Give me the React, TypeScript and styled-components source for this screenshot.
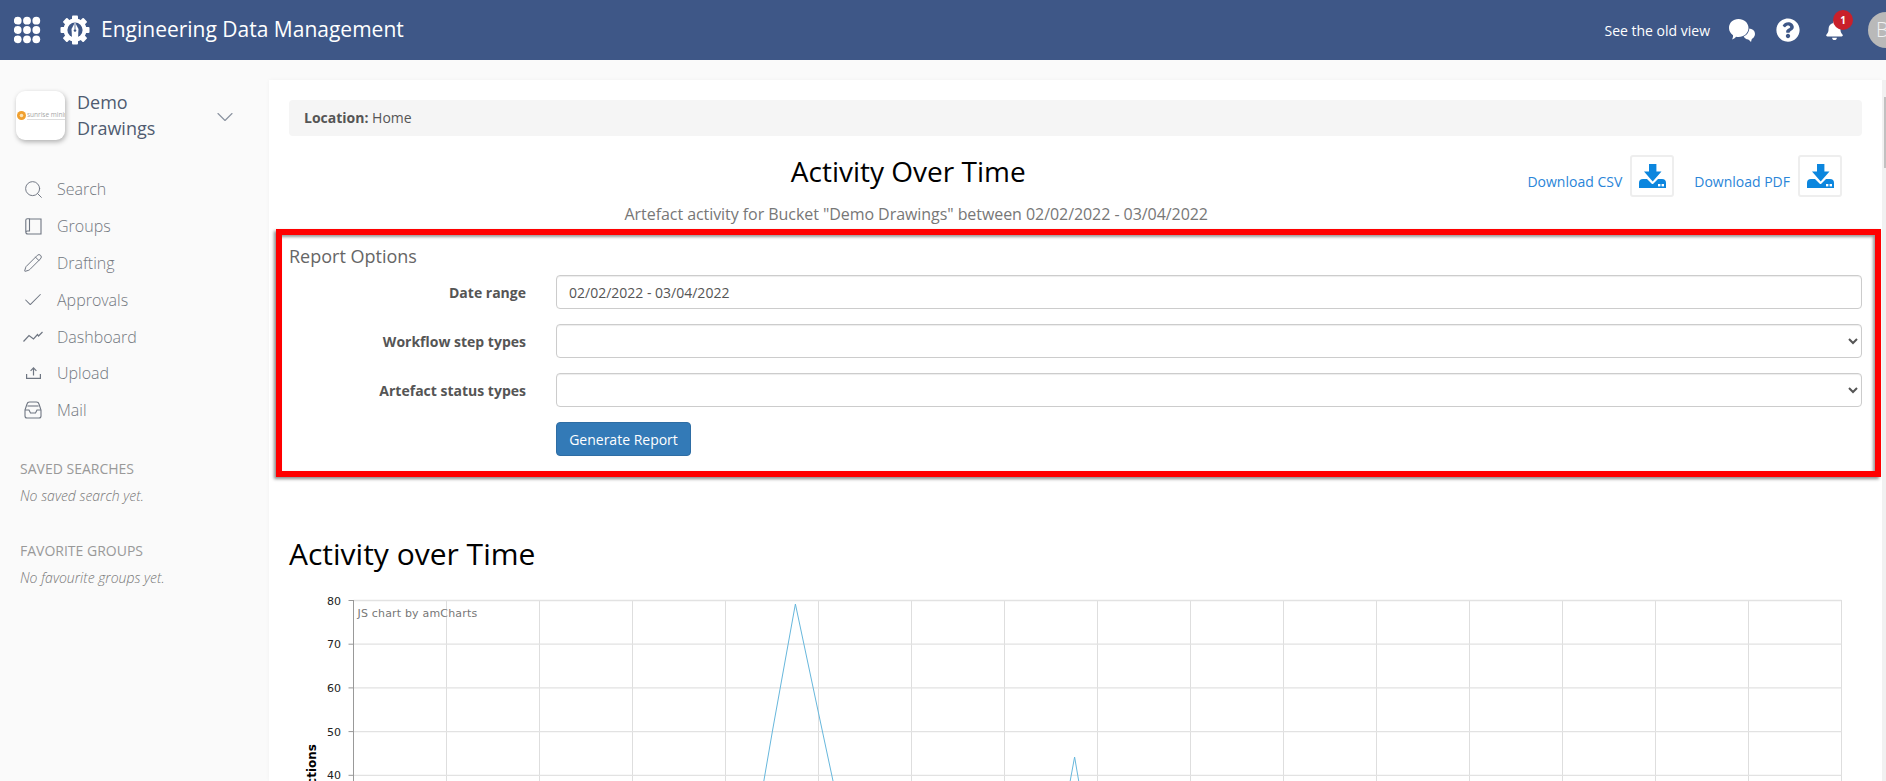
import React from "react";
import styled, { createGlobalStyle } from "styled-components";
import { Search, Pencil, Check, ChevronDown } from "lucide-react";
import { FaQuestionCircle, FaBell } from "react-icons/fa";

const GlobalStyle = createGlobalStyle`
  html, body {
    margin: 0;
    height: 100%;
    overflow: hidden;
    background: #fafafa;
    font-family: "Open Sans", "Liberation Sans", sans-serif;
  }
  * { box-sizing: border-box; }
`;

const Page = styled.div`
  height: 781px;
  overflow: hidden;
  display: flex;
  flex-direction: column;
`;

const TopBar = styled.header`
  flex: none;
  height: 60px;
  background: #3e5787;
  color: #fff;
  display: flex;
  align-items: center;
  padding-left: 14px;
  overflow: hidden;
`;

const AppTitle = styled.span`
  margin-left: 11px;
  font-size: 21px;
  line-height: 28px;
  margin-top: -2px;
`;

const TopRight = styled.div`
  margin-left: auto;
  display: flex;
  align-items: center;
  margin-right: -18px;
`;

const OldView = styled.a`
  font-size: 14px;
  color: #fff;
  margin-right: 19px;
`;

const TopIcon = styled.span<{ $gap: number }>`
  display: flex;
  position: relative;
  margin-right: ${(p) => p.$gap}px;
`;

const Badge = styled.span`
  position: absolute;
  top: -11px;
  left: 8px;
  width: 20px;
  height: 20px;
  border-radius: 50%;
  background: #c9202a;
  color: #fff;
  font-size: 10px;
  font-weight: 700;
  line-height: 20px;
  text-align: center;
`;

const Avatar = styled.span`
  flex: none;
  width: 36px;
  height: 36px;
  border-radius: 50%;
  background: #b9b9b9;
  color: #f2f2f2;
  font-size: 20px;
  font-weight: 300;
  line-height: 36px;
  padding-left: 8px;
`;

const Body = styled.div`
  flex: 1;
  display: flex;
  min-height: 0;
`;

const Sidebar = styled.aside`
  flex: none;
  width: 269px;
  padding: 31px 0 0 16px;
`;

const Brand = styled.div`
  display: flex;
  align-items: center;
  height: 49px;
`;

const LogoTile = styled.div`
  flex: none;
  width: 49px;
  height: 49px;
  border-radius: 9px;
  background: #fff;
  box-shadow: 1px 2px 5px rgba(0, 0, 0, 0.3);
  display: flex;
  align-items: center;
  overflow: hidden;
  padding-left: 1px;
  margin-right: 12px;
`;

const LogoText = styled.span`
  font-size: 6.5px;
  line-height: 8px;
  color: #a5a5a5;
  white-space: nowrap;
  margin-left: 1px;
  border-bottom: 1px solid #ddd;
`;

const BrandName = styled.div`
  width: 125px;
  margin-top: -2px;
  font-size: 18px;
  line-height: 26px;
  color: #4f5b70;
`;

const BrandCaret = styled.span`
  display: flex;
  margin: 0 0 -2px 9px;
  color: #8b93a0;
`;

const Nav = styled.nav`
  margin-top: 31px;
`;

const NavItem = styled.a`
  display: flex;
  align-items: center;
  height: 36.8px;
  font-size: 16px;
  font-weight: 300;
  color: #73787f;
`;

const NavIcon = styled.span`
  display: flex;
  flex: none;
  justify-content: center;
  width: 16px;
  margin: 0 16px 0 9px;
  color: #6f7682;
  svg { flex: none; }
`;

const SideHeading = styled.div<{ $top: number }>`
  margin-top: ${(p) => p.$top}px;
  padding-left: 4px;
  font-size: 14px;
  font-weight: 400;
  line-height: 20px;
  color: #999;
`;

const SideNote = styled.div`
  margin-top: 7px;
  padding-left: 4px;
  font-size: 14px;
  font-weight: 300;
  font-style: italic;
  line-height: 20px;
  color: #777;
`;

const Card = styled.main`
  flex: 1;
  min-width: 0;
  margin-top: 20px;
  padding: 20px 20px 0;
  background: #fff;
  box-shadow: 0 0 4px rgba(0, 0, 0, 0.04);
`;

const Crumb = styled.div`
  height: 36px;
  border-radius: 4px;
  background: #f5f5f5;
  padding-left: 15px;
  font-size: 14px;
  line-height: 36px;
  color: #555;
  b { font-weight: 700; }
`;

const HeadRow = styled.div`
  display: flex;
  height: 93px;
`;

const HeadText = styled.div`
  flex: 1;
  padding-top: 17px;
  text-align: center;
`;

const ReportTitle = styled.h2`
  margin: 0;
  font-size: 28px;
  font-weight: 400;
  line-height: 36px;
  color: #000;
`;

const ReportSub = styled.p`
  margin: 15px 0 0;
  padding-left: 16px;
  font-size: 16px;
  letter-spacing: -0.06px;
  line-height: 20px;
  color: #777;
`;

const Downloads = styled.div`
  flex: none;
  display: flex;
  padding: 19px 20px 0 0;
`;

const DownloadLink = styled.a`
  margin: 17px 8px 0 0;
  font-size: 14px;
  line-height: 20px;
  color: #2a85d8;
`;

const DownloadBox = styled.span`
  display: flex;
  align-items: center;
  justify-content: center;
  width: 44px;
  height: 42px;
  border: 2px solid #eee;
  border-radius: 3px;
  margin-right: 20px;
  &:last-child { margin-right: 0; }
`;

const OptionsBox = styled.section`
  margin: 0 -19px 0 -13px;
  padding: 9px 13px 15px 7px;
  border: 6px solid #f00;
  box-shadow: -2px 2px 3px rgba(0, 0, 0, 0.45), inset -2px 2px 3px rgba(0, 0, 0, 0.4);
  background: #fff;
`;

const OptionsTitle = styled.div`
  font-size: 18px;
  line-height: 24px;
  color: #666;
  margin-bottom: 7px;
`;

const FormRow = styled.div`
  display: grid;
  grid-template-columns: 237px 1fr;
  column-gap: 30px;
  align-items: center;
  margin-bottom: 15px;
  &:last-child { margin-bottom: 0; }
`;

const FieldLabel = styled.label`
  font-size: 14px;
  font-weight: 700;
  text-align: right;
  color: #555;
`;

const fieldStyle = `
  width: 100%;
  height: 34px;
  border: 1px solid #ccc;
  border-radius: 4px;
  background: #fff;
  font-family: "Open Sans", "Liberation Sans", sans-serif;
  font-size: 14px;
  color: #555;
`;

const TextField = styled.input`
  ${fieldStyle}
  padding: 0 12px;
  box-shadow: inset 0 1px 1px rgba(0, 0, 0, 0.075);
`;

const SelectField = styled.select`
  ${fieldStyle}
  padding: 0 8px;
  box-shadow: inset 0 1px 1px rgba(0, 0, 0, 0.075);
`;

const GenerateButton = styled.button`
  width: 135px;
  height: 34px;
  padding: 0;
  border: 1px solid #2e6da4;
  border-radius: 4px;
  background: #337ab7;
  color: #fff;
  font-family: "Open Sans", "Liberation Sans", sans-serif;
  font-size: 14px;
`;

const SectionTitle = styled.h1`
  margin: 57px 0 0;
  font-size: 30px;
  font-weight: 400;
  line-height: 40px;
  color: #000;
`;

const ChartSvg = styled.svg`
  display: block;
  margin-top: 15px;
`;

const Scrollbar = styled.div`
  flex: none;
  width: 4px;
  margin-top: 20px;
  padding: 17px 0 0 2px;
  background: #f1f1f1;
`;

const ScrollThumb = styled.div`
  width: 2px;
  height: 71px;
  background: #c1c1c1;
`;

const GridMenuIcon = () => (
  <svg width="28" height="28" viewBox="0 0 28 28" fill="#fff">
    {[4.7, 14, 23.3].map((cy) =>
      [3.7, 13, 22.3].map((cx) => <circle key={`${cx}-${cy}`} cx={cx} cy={cy} r="3.9" />)
    )}
  </svg>
);

const GearLogo = () => (
  <svg width="30" height="30" viewBox="0 0 30 30" style={{ marginLeft: 18 }}>
    {[0, 45, 90, 135, 180, 225, 270, 315].map((a) => (
      <rect key={a} x="12" y="0.5" width="6" height="6" rx="1" fill="#fff" transform={`rotate(${a} 15 15)`} />
    ))}
    <circle cx="15" cy="15" r="11.5" fill="#fff" />
    <circle cx="15" cy="15" r="7.6" fill="#3e5787" />
    <path d="M15 7.5 L18.5 14 L18 23 H12 L11.5 14 Z" fill="#fff" />
    <circle cx="15" cy="15.5" r="1.3" fill="#3e5787" />
    <rect x="14.6" y="9" width="0.8" height="5" fill="#3e5787" />
  </svg>
);

const ChatIcon = () => (
  <svg width="26" height="23" viewBox="0 0 26 23" fill="#fff">
    <ellipse cx="20" cy="15" rx="6" ry="5.5" />
    <path d="M17 18 L22 23 L23.5 17 Z" />
    <g stroke="#3e5787" strokeWidth="1.6" paintOrder="stroke">
      <path d="M9.5 0 C15 0 19.5 3.8 19.5 9 C19.5 14 15 18 9.5 18 C8.6 18 7.8 17.9 7 17.7 C6 19 4.6 20 3 20.4 C3.8 19 4.2 17.6 4 16.2 C1.6 14.6 0 12 0 9 C0 3.8 4 0 9.5 0 Z" />
    </g>
  </svg>
);

const DownloadIcon = () => (
  <svg width="27" height="24" viewBox="0 0 27 24">
    <path d="M4 15 H23 a4 4 0 0 1 4 4 V24 H0 V19 a4 4 0 0 1 4 -4 Z" fill="#0c86de" />
    <path d="M6 13 H21 L14 20 H13 Z" fill="#fff" />
    <path d="M10 0 H17.4 V7.5 H22.5 L13.7 17.5 L5 7.5 H10 Z" fill="#0c86de" />
    <rect x="19" y="20" width="2.4" height="2.4" fill="#fff" />
    <rect x="22.6" y="20" width="2.4" height="2.4" fill="#fff" />
  </svg>
);

const BookIcon = () => (
  <svg width="17" height="17" viewBox="0 0 17 17" fill="none" stroke="currentColor" strokeWidth="1.1">
    <path d="M4.5 1 H16 V16 H3 C1.6 16 0.8 15.2 0.8 14 V2.2 C0.8 1.4 1.5 0.8 2.4 0.8 H4.5 V13 H2.6 C1.5 13 0.8 13.6 0.8 14.4" />
  </svg>
);

const TrendIcon = () => (
  <svg width="20" height="16" viewBox="0 0 20 16" fill="none" stroke="currentColor" strokeWidth="1.2">
    <path d="M0.5 12.5 L6 6.5 L10.5 10 L14.5 5.5 L15.5 7 L19.5 3" />
  </svg>
);

const TrayUpIcon = () => (
  <svg width="15" height="12" viewBox="0 0 15 12" fill="none" stroke="currentColor" strokeWidth="1.2">
    <path d="M0.6 7 V11.4 H14.4 V7" />
    <path d="M7.5 8.5 V1 M4.6 3.8 L7.5 0.9 L10.4 3.8" />
  </svg>
);

const InboxIcon = () => (
  <svg width="18" height="18" viewBox="0 0 18 18" fill="none" stroke="currentColor" strokeWidth="1.1">
    <path d="M1 9 L3 3 Q3.5 1 5.5 1 H12.5 Q14.5 1 15 3 L17 9 V15 Q17 17 15 17 H3 Q1 17 1 15 Z" />
    <path d="M1 9 H5 L6.5 12 H11.5 L13 9 H17" />
    <path d="M3.4 5 H14.6" />
  </svg>
);

const navItems = [
  { label: "Search", icon: <Search size={21} strokeWidth={1.1} /> },
  { label: "Groups", icon: <BookIcon /> },
  { label: "Drafting", icon: <Pencil size={20} strokeWidth={1.2} /> },
  { label: "Approvals", icon: <Check size={22} strokeWidth={1.1} /> },
  { label: "Dashboard", icon: <TrendIcon /> },
  { label: "Upload", icon: <TrayUpIcon /> },
  { label: "Mail", icon: <InboxIcon /> },
];

// chart coordinates are measured from the top-left corner of the svg
const axisX = 64.5;
const plotRight = axisX + 93 * 16;
const ticks = [80, 70, 60, 50, 40, 30, 20, 10, 0];

const ActivityChart = () => (
  <ChartSvg width="1573" height="380" fontFamily="'DejaVu Sans', Verdana, sans-serif">
    {Array.from({ length: 17 }, (_, i) => (
      <line key={i} x1={axisX + 93 * i} x2={axisX + 93 * i} y1="11" y2="360" stroke="#dedede" />
    ))}
    {ticks.map((t, i) => {
      const y = 11.5 + 43.7 * i;
      return (
        <g key={t}>
          <line x1={axisX} x2={plotRight} y1={y} y2={y} stroke="#e2e2e2" strokeWidth="1.3" />
          <line x1={axisX - 5} x2={axisX} y1={y} y2={y} stroke="#999" />
          <text x="52" y={y + 4} fontSize="11" textAnchor="end" fill="#222">
            {t}
          </text>
        </g>
      );
    })}
    <line x1={axisX} x2={axisX} y1="11" y2="360" stroke="#999" />
    <text x="68.5" y="28" fontSize="11" letterSpacing="0.18" fill="#777">
      JS chart by amCharts
    </text>
    <text transform="rotate(-90 27 155)" x="27" y="155" fontSize="12" fontWeight="700" textAnchor="end" fill="#000">
      Actions
    </text>
    <polyline
      points="470,220 483.8,140 506.4,15 527.8,116 550,220"
      fill="none"
      stroke="#67b7dc"
    />
    <polyline points="776,220 785.6,168 794.5,220" fill="none" stroke="#67b7dc" />
  </ChartSvg>
);

export default function App() {
  return (
    <Page>
      <GlobalStyle />
      <TopBar>
        <GridMenuIcon />
        <GearLogo />
        <AppTitle>Engineering Data Management</AppTitle>
        <TopRight>
          <OldView>See the old view</OldView>
          <TopIcon $gap={21}>
            <ChatIcon />
          </TopIcon>
          <TopIcon $gap={25}>
            <FaQuestionCircle size={24} />
          </TopIcon>
          <TopIcon $gap={24}>
            <FaBell size={19} />
            <Badge>1</Badge>
          </TopIcon>
          <Avatar>B</Avatar>
        </TopRight>
      </TopBar>
      <Body>
        <Sidebar>
          <Brand>
            <LogoTile>
              <svg width="9" height="9" viewBox="0 0 9 9" style={{ flex: "none" }}>
                <circle cx="4.5" cy="4.5" r="4.5" fill="#f0a030" />
                <circle cx="4.5" cy="4.5" r="1.8" fill="#fbe3b5" />
              </svg>
              <LogoText>sunrise mining</LogoText>
            </LogoTile>
            <BrandName>Demo Drawings</BrandName>
            <BrandCaret>
              <ChevronDown size={28} strokeWidth={1} />
            </BrandCaret>
          </Brand>
          <Nav>
            {navItems.map((item) => (
              <NavItem key={item.label}>
                <NavIcon>{item.icon}</NavIcon>
                {item.label}
              </NavItem>
            ))}
          </Nav>
          <SideHeading $top={30}>SAVED SEARCHES</SideHeading>
          <SideNote>No saved search yet.</SideNote>
          <SideHeading $top={35}>FAVORITE GROUPS</SideHeading>
          <SideNote>No favourite groups yet.</SideNote>
        </Sidebar>
        <Card>
          <Crumb>
            <b>Location:</b> Home
          </Crumb>
          <HeadRow>
            <HeadText>
              <ReportTitle>Activity Over Time</ReportTitle>
              <ReportSub>Artefact activity for Bucket "Demo Drawings" between 02/02/2022 - 03/04/2022</ReportSub>
            </HeadText>
            <Downloads>
              <DownloadLink>Download CSV</DownloadLink>
              <DownloadBox>
                <DownloadIcon />
              </DownloadBox>
              <DownloadLink>Download PDF</DownloadLink>
              <DownloadBox>
                <DownloadIcon />
              </DownloadBox>
            </Downloads>
          </HeadRow>
          <OptionsBox>
            <OptionsTitle>Report Options</OptionsTitle>
            <FormRow>
              <FieldLabel>Date range</FieldLabel>
              <TextField readOnly value="02/02/2022 - 03/04/2022" />
            </FormRow>
            <FormRow>
              <FieldLabel>Workflow step types</FieldLabel>
              <SelectField />
            </FormRow>
            <FormRow>
              <FieldLabel>Artefact status types</FieldLabel>
              <SelectField />
            </FormRow>
            <FormRow>
              <span />
              <div>
                <GenerateButton>Generate Report</GenerateButton>
              </div>
            </FormRow>
          </OptionsBox>
          <SectionTitle>Activity over Time</SectionTitle>
          <ActivityChart />
        </Card>
        <Scrollbar>
          <ScrollThumb />
        </Scrollbar>
      </Body>
    </Page>
  );
}
